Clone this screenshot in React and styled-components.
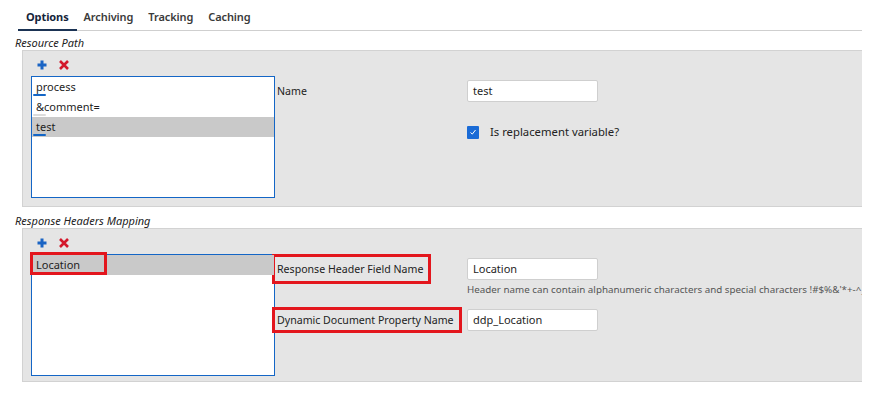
import styled, { createGlobalStyle } from "styled-components";

const GlobalStyle = createGlobalStyle`
    html, body {
        margin: 0;
        padding: 0;
        background: #ffffff;
    }
    body {
        font-family: "Noto Sans", "Open Sans", Arial, sans-serif;
        font-size: 11px;
        color: #222;
    }
`;

const Page = styled.div`
    width: 877px;
    height: 393px;
    box-sizing: border-box;
    padding: 0 15px 0 15px;
    overflow: hidden;
`;

const TabBar = styled.div`
    display: flex;
    margin-left: 3px;
    border-bottom: 1px solid #cfcfcf;
`;

const Tab = styled.div`
    padding: 10px 8px 5px 8px;
    margin-right: -1px;
    line-height: 14px;
    font-size: 11px;
    font-weight: ${(p) => (p.$active ? 700 : 600)};
    color: ${(p) => (p.$active ? "#14243a" : "#3a3a3a")};
    border-bottom: 2px solid ${(p) => (p.$active ? "#1b3354" : "transparent")};
    margin-bottom: -1px;
    letter-spacing: -0.1px;
`;

const Heading = styled.div`
    margin-top: ${(p) => p.$top}px;
    font-style: italic;
    line-height: 14px;
    color: #222;
`;

const Panel = styled.div`
    margin-left: 7px;
    background: #e5e5e5;
    border: 1px solid #d2d2d2;
    border-right: none;
    padding: 8px 0 ${(p) => p.$bottom}px 8px;
    overflow: hidden;
`;

const Toolbar = styled.div`
    display: flex;
    gap: 10px;
    padding-left: 5px;
    height: 12px;
    margin-bottom: 5px;
`;

const Body = styled.div`
    display: flex;
    align-items: flex-start;
`;

const List = styled.div`
    width: 242px;
    height: 120px;
    flex: none;
    background: #fff;
    border: 1px solid #1466c6;
`;

const Item = styled.div`
    position: relative;
    height: 20px;
    line-height: 19px;
    padding-left: 4px;
    background: ${(p) => (p.$selected ? "#c9c9c9" : "transparent")};
    color: #1e1e1e;

    &::after {
        content: "";
        display: ${(p) => (p.$mark ? "block" : "none")};
        position: absolute;
        left: 1px;
        top: 17px;
        width: 13px;
        height: 2px;
        border-radius: 1px;
        background: ${(p) => (p.$mark === "blue" ? "#1466c6" : "#dcdcdc")};
    }
`;

const ItemMark = styled.span`
    position: absolute;
    left: -2px;
    top: -3px;
    width: 71px;
    height: 17px;
    border: 3px solid #e3161d;
`;

const Form = styled.div`
    display: flex;
    flex-direction: column;
    padding-top: 4px;
`;

const Row = styled.div`
    display: flex;
    align-items: ${(p) => (p.$top ? "flex-start" : "center")};
    margin-top: ${(p) => p.$gap || 0}px;
`;

const LabelCell = styled.div`
    width: 192px;
    flex: none;
    display: flex;
    align-items: center;
`;

const Label = styled.span`
    display: inline-flex;
    align-items: center;
    white-space: nowrap;
    line-height: 14px;
    font-size: 10.6px;
    color: #222;
    padding-left: 2px;
    ${(p) =>
        p.$marked &&
        `
        border: 3px solid #e3161d;
        margin-left: -3px;
        height: ${p.$marked}px;
        padding-right: 5px;
        box-sizing: border-box;
    `}
`;

const Field = styled.div`
    display: flex;
    flex-direction: column;
`;

const Input = styled.div`
    width: 131px;
    height: 22px;
    box-sizing: border-box;
    background: #fff;
    border: 1px solid #cfcfcf;
    border-radius: 2px;
    padding-left: 5px;
    line-height: 20px;
    color: #1e1e1e;
`;

const Help = styled.div`
    margin-top: 4px;
    line-height: 12px;
    font-size: 9.8px;
    color: #555;
    white-space: nowrap;
`;

const CheckRow = styled.label`
    display: flex;
    align-items: center;
    gap: 11px;
    color: #222;
    line-height: 14px;
    font-size: 11.3px;
`;

const Box = styled.span`
    width: 12px;
    height: 13px;
    border-radius: 1px;
    background: #1a6bd6;
    display: flex;
    align-items: center;
    justify-content: center;
`;

const PlusIcon = () => (
    <svg width="12" height="12" viewBox="0 0 12 12">
        <path d="M6 1.5v9M1.5 6h9" stroke="#1a64c4" strokeWidth="3" strokeLinecap="butt" />
    </svg>
);

const CrossIcon = () => (
    <svg width="12" height="12" viewBox="0 0 12 12">
        <path d="M2 2l8 8M10 2l-8 8" stroke="#d3182b" strokeWidth="2.6" />
    </svg>
);

const Check = () => (
    <svg width="8" height="8" viewBox="0 0 8 8">
        <path d="M1.5 4.5l1.8 1.6L6.5 2" stroke="#fff" strokeWidth="1" fill="none" />
    </svg>
);

const Tools = () => (
    <Toolbar>
        <PlusIcon />
        <CrossIcon />
    </Toolbar>
);

const App = () => {
    const tabs = ["Options", "Archiving", "Tracking", "Caching"];

    return (
        <Page>
            <GlobalStyle />
            <TabBar>
                {tabs.map((t, i) => (
                    <Tab key={t} $active={i === 0}>{t}</Tab>
                ))}
            </TabBar>

            <Heading $top={5}>Resource Path</Heading>
            <Panel $bottom={8}>
                <Tools />
                <Body>
                    <List>
                        <Item $mark="blue">process</Item>
                        <Item $mark="gray">&amp;comment=</Item>
                        <Item $selected $mark="blue">test</Item>
                    </List>
                    <Form>
                        <Row>
                            <LabelCell><Label>Name</Label></LabelCell>
                            <Input>test</Input>
                        </Row>
                        <Row $gap={23}>
                            <LabelCell />
                            <CheckRow>
                                <Box><Check /></Box>
                                Is replacement variable?
                            </CheckRow>
                        </Row>
                    </Form>
                </Body>
            </Panel>

            <Heading $top={7}>Response Headers Mapping</Heading>
            <Panel $bottom={5}>
                <Tools />
                <Body>
                    <List>
                        <Item $selected>
                            Location
                            <ItemMark />
                        </Item>
                    </List>
                    <Form>
                        <Row $top>
                            <LabelCell><Label $marked={30} style={{ marginTop: -4 }}>Response Header Field Name</Label></LabelCell>
                            <Field>
                                <Input>Location</Input>
                                <Help>Header name can contain alphanumeric characters and special characters !#$%&amp;'*+-^_`|~</Help>
                            </Field>
                        </Row>
                        <Row $gap={11}>
                            <LabelCell><Label $marked={26}>Dynamic Document Property Name</Label></LabelCell>
                            <Input>ddp_Location</Input>
                        </Row>
                    </Form>
                </Body>
            </Panel>
        </Page>
    );
};

export default App;
